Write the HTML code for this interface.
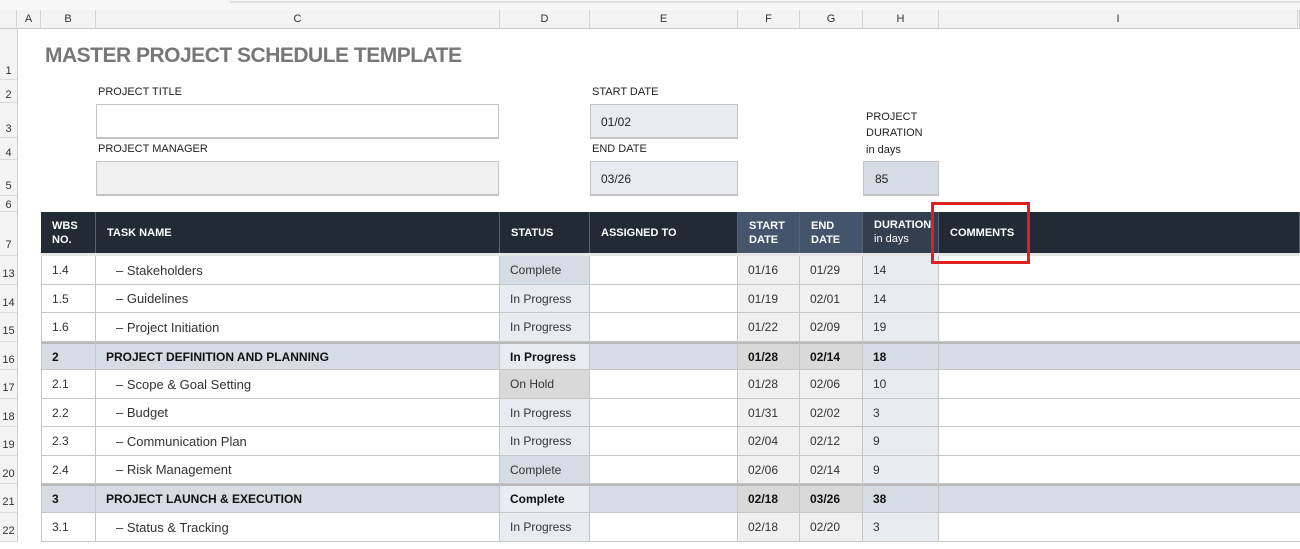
<!DOCTYPE html>
<html><head><meta charset="utf-8"><style>
*{margin:0;padding:0;box-sizing:border-box}
body{width:1300px;height:542px;overflow:hidden;background:#fff;font-family:"Century Gothic","Liberation Sans",sans-serif;color:#222;position:relative}
div{position:absolute}
.ch{top:10px;height:19px;background:#f3f3f3;border-right:1px solid #d4d4d4;border-bottom:1px solid #c8c8c8;font-size:11px;color:#333;text-align:center;line-height:19px}
.rn{left:0;width:17px;background:#f3f3f3;border-bottom:1px solid #dadada;font-size:11px;color:#333;text-align:center}
.lbl{font-size:11px;color:#222}
.c{font-size:12px;white-space:nowrap;padding-left:10px;border-right:1px solid #c6c6c6;border-bottom:1px solid #c6c6c6;display:flex;align-items:center;color:#333}
.h{color:#fff;font-weight:bold;font-size:11px;line-height:14px;padding-left:11px;display:flex;align-items:center;background:#222a35;border-right:1px solid #5a6270}
</style></head><body>
<div style="left:0;top:0;width:1300px;height:10px;background:#f7f7f7"></div>
<div style="left:230px;top:1px;width:1070px;height:2px;background:#dedede"></div>
<div class="ch" style="left:0;width:17px"></div>
<div class="ch" style="left:17px;width:24px">A</div>
<div class="ch" style="left:41px;width:55px">B</div>
<div class="ch" style="left:96px;width:404px">C</div>
<div class="ch" style="left:500px;width:90px">D</div>
<div class="ch" style="left:590px;width:148px">E</div>
<div class="ch" style="left:738px;width:62px">F</div>
<div class="ch" style="left:800px;width:63px">G</div>
<div class="ch" style="left:863px;width:76px">H</div>
<div class="ch" style="left:939px;width:359px">I</div>
<div class="ch" style="left:1298px;width:2px"></div>
<div class="rn" style="top:29px;height:51px;line-height:84px">1</div>
<div class="rn" style="top:80px;height:23px;line-height:30px">2</div>
<div class="rn" style="top:103px;height:35px;line-height:52px">3</div>
<div class="rn" style="top:138px;height:22px;line-height:30px">4</div>
<div class="rn" style="top:160px;height:36px;line-height:52px">5</div>
<div class="rn" style="top:196px;height:16px;line-height:18px">6</div>
<div class="rn" style="top:212px;height:44px;line-height:66px">7</div>
<div class="rn" style="top:256px;height:29px;line-height:36px">13</div>
<div class="rn" style="top:285px;height:28px;line-height:36px">14</div>
<div class="rn" style="top:313px;height:29px;line-height:36px">15</div>
<div class="rn" style="top:342px;height:28px;line-height:36px">16</div>
<div class="rn" style="top:370px;height:29px;line-height:36px">17</div>
<div class="rn" style="top:399px;height:28px;line-height:36px">18</div>
<div class="rn" style="top:427px;height:29px;line-height:36px">19</div>
<div class="rn" style="top:456px;height:28px;line-height:36px">20</div>
<div class="rn" style="top:484px;height:29px;line-height:36px">21</div>
<div class="rn" style="top:513px;height:29px;line-height:36px">22</div>
<div style="left:17px;top:29px;width:1px;height:513px;background:#d0d0d0"></div>

<div style="left:45px;top:44px;font-size:21px;font-weight:bold;color:#777;letter-spacing:-0.5px">MASTER PROJECT SCHEDULE TEMPLATE</div>
<div class="lbl" style="left:98px;top:86px">PROJECT TITLE</div>
<div style="left:96px;top:104px;width:403px;height:35px;border:1px solid #c4c4c4;border-bottom:2px solid #c4c4c4"></div>
<div class="lbl" style="left:98px;top:143px">PROJECT MANAGER</div>
<div style="left:96px;top:161px;width:403px;height:35px;border:1px solid #c4c4c4;border-bottom:2px solid #c4c4c4;background:#f0f0f0"></div>
<div class="lbl" style="left:592px;top:86px">START DATE</div>
<div style="left:590px;top:104px;width:148px;height:35px;border:1px solid #c4c4c4;border-bottom:2px solid #c4c4c4;background:#e8ecf1;font-size:12px;padding:10px 0 0 10px">01/02</div>
<div class="lbl" style="left:592px;top:143px">END DATE</div>
<div style="left:590px;top:161px;width:148px;height:35px;border:1px solid #c4c4c4;border-bottom:2px solid #c4c4c4;background:#e8ecf1;font-size:12px;padding:10px 0 0 10px">03/26</div>
<div class="lbl" style="left:866px;top:109px;line-height:16px">PROJECT<br>DURATION</div>
<div class="lbl" style="left:866px;top:144px">in days</div>
<div style="left:863px;top:161px;width:76px;height:35px;border:1px solid #c4c4c4;border-bottom:2px solid #c4c4c4;background:#d6dce4;font-size:12px;padding:10px 0 0 11px">85</div>

<div class="h" style="left:41px;top:212px;width:55px;height:41px">WBS<br>NO.</div>
<div class="h" style="left:96px;top:212px;width:404px;height:41px">TASK NAME</div>
<div class="h" style="left:500px;top:212px;width:90px;height:41px">STATUS</div>
<div class="h" style="left:590px;top:212px;width:148px;height:41px">ASSIGNED TO</div>
<div class="h" style="left:738px;top:212px;width:62px;height:41px;background:#44546a">START<br>DATE</div>
<div class="h" style="left:800px;top:212px;width:63px;height:41px;background:#44546a">END<br>DATE</div>
<div class="h" style="left:863px;top:212px;width:76px;height:41px;background:#333f4f;display:block;padding-top:6px;overflow:hidden">DURATION<br><span style="font-weight:normal">in days</span></div>
<div class="h" style="left:939px;top:212px;width:361px;height:41px">COMMENTS</div>
<div style="left:41px;top:253px;width:1259px;height:3px;background:#e6e6e6"></div>

<div id="rows"></div>
<script>
var rows=[
["1.4","– Stakeholders","Complete","01/16","01/29","14",0,256,29],
["1.5","– Guidelines","In Progress","01/19","02/01","14",0,285,28],
["1.6","– Project Initiation","In Progress","01/22","02/09","19",0,313,29],
["2","PROJECT DEFINITION AND PLANNING","In Progress","01/28","02/14","18",1,342,28],
["2.1","– Scope &amp; Goal Setting","On Hold","01/28","02/06","10",0,370,29],
["2.2","– Budget","In Progress","01/31","02/02","3",0,399,28],
["2.3","– Communication Plan","In Progress","02/04","02/12","9",0,427,29],
["2.4","– Risk Management","Complete","02/06","02/14","9",0,456,28],
["3","PROJECT LAUNCH &amp; EXECUTION","Complete","02/18","03/26","38",1,484,29],
["3.1","– Status &amp; Tracking","In Progress","02/18","02/20","3",0,513,29]];
var h="";
rows.forEach(function(r){
var g=r[6],t=r[7],ht=r[8];
var base=g?"#d6dce4":"#fff";
var st=g?"#e8ecf1":(r[2]=="Complete"?"#d6dce4":r[2]=="On Hold"?"#d9d9d9":"#e8ecf1");
var fg=g?"#d9d9d9":"#f0f0f0";
var hc=g?"#d6dce4":"#e8ecf1";
var fw=g?"font-weight:bold;color:#111;":"";
var bt=g?"border-top:2px solid #b8b8b8;":"";
function c(l,w,bg,txt,ex){h+='<div class="c" style="left:'+l+'px;top:'+t+'px;width:'+w+'px;height:'+ht+'px;background:'+bg+';'+fw+bt+(ex||"")+'">'+txt+'</div>';}
c(41,55,base,r[0],"border-left:1px solid #c6c6c6;");
c(96,404,base,r[1],g?"":"padding-left:20px;font-size:13px;");
c(500,90,st,r[2]);
c(590,148,base,"");
c(738,62,fg,r[3]);
c(800,63,fg,r[4]);
c(863,76,hc,r[5]);
c(939,361,base,"","border-right:none;");
});
document.getElementById("rows").outerHTML=h;
</script>
<div style="left:931px;top:202px;width:99px;height:62px;border:3px solid #e02020"></div>
</body></html>
